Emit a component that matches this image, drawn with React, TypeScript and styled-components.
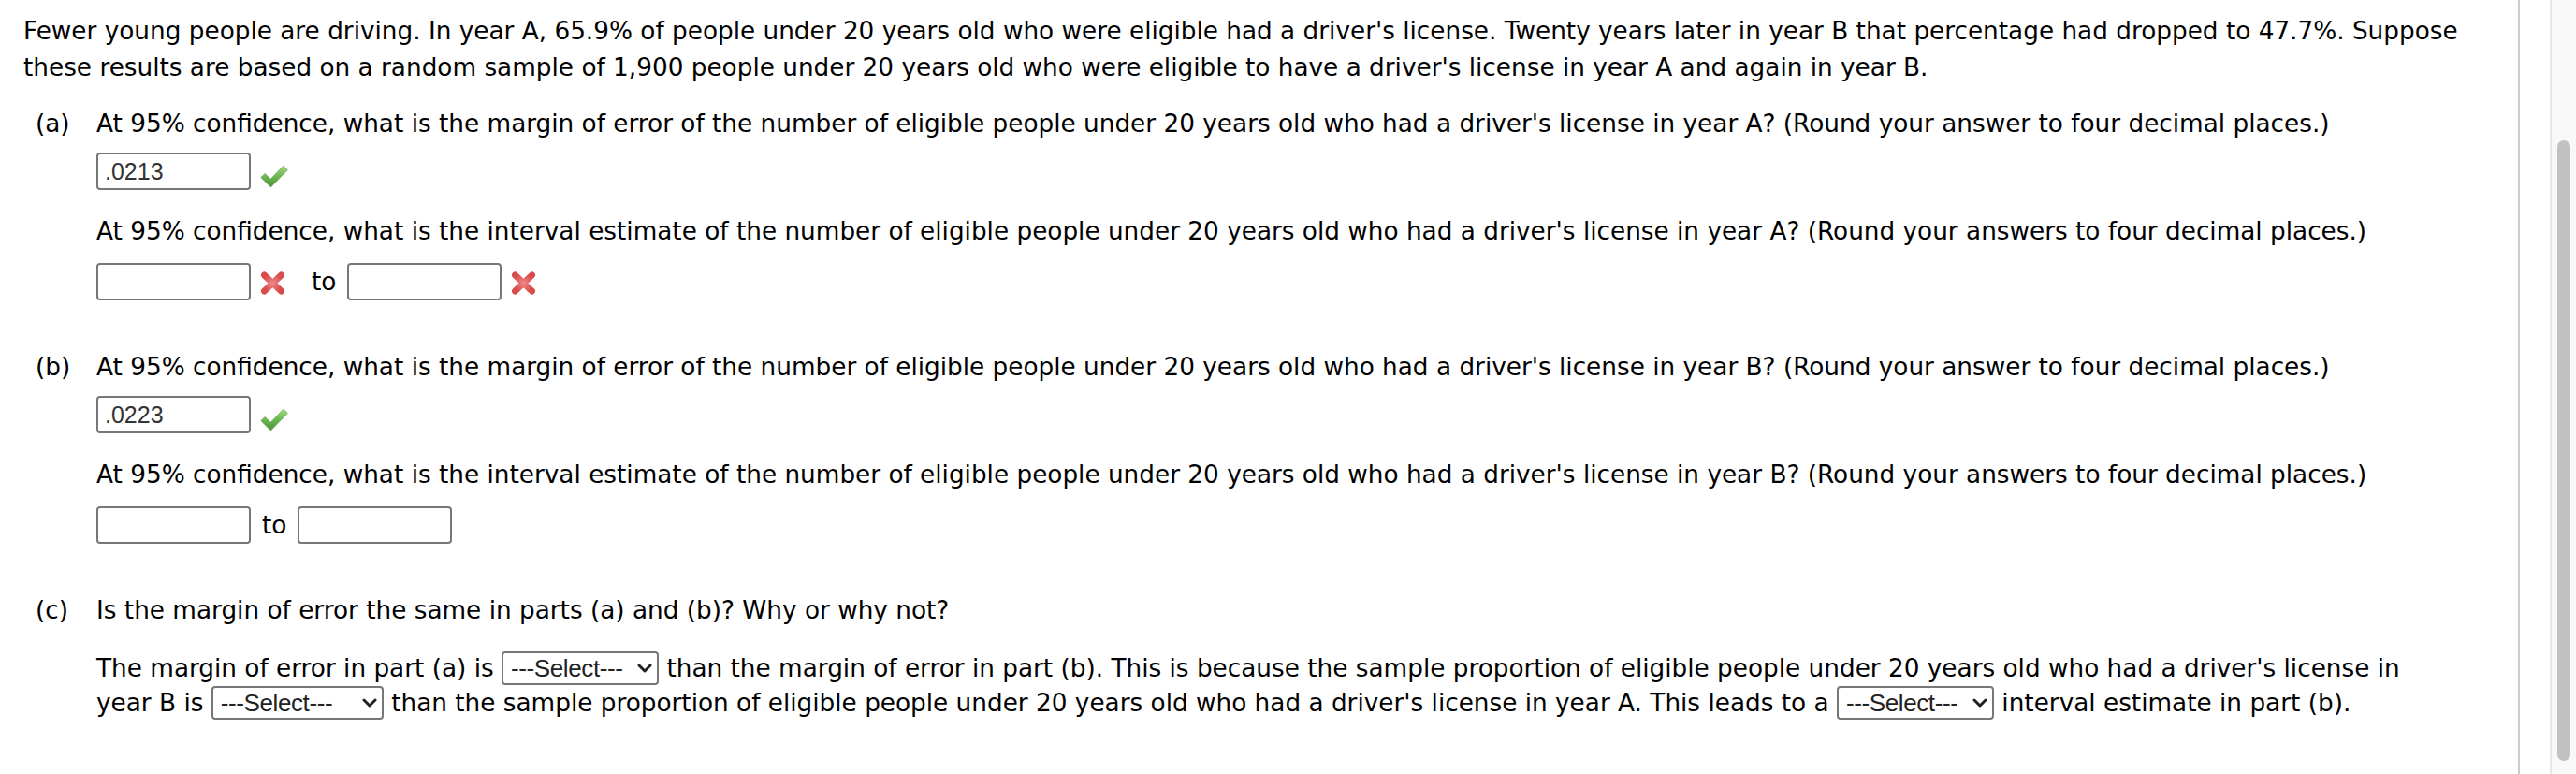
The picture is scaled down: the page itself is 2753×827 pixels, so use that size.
import React, { useId } from 'react'
import styled, { createGlobalStyle } from 'styled-components'

const GlobalStyle = createGlobalStyle`
  html, body {
    margin: 0;
    padding: 0;
    background: #ffffff;
  }
  body {
    font-family: "DejaVu Sans", Verdana, sans-serif;
    font-size: 26.3px;
    color: #000000;
  }
`

const Page = styled.div`
  display: flex;
  height: 827px;
  overflow: hidden;
`

const Main = styled.main`
  flex: 1;
  padding: 14px 19px 0 25px;
  border-right: 2px solid #cccccc;
  box-sizing: border-box;
`

const Gutter = styled.div`
  width: 32px;
`

const ScrollTrack = styled.div`
  width: 28px;
  padding: 150px 6px 0;
  border-left: 2px solid #e6e6e6;
  background: #f8f8f8;
  box-sizing: border-box;
`

const ScrollThumb = styled.div`
  height: 663px;
  border-radius: 8px;
  background: #c1c1c1;
`

const Intro = styled.p`
  margin: 0;
  line-height: 38.5px;
`

const Part = styled.section<{ first?: boolean }>`
  display: grid;
  grid-template-columns: 65px 1fr;
  margin-top: ${(p) => (p.first ? '22px' : '52px')};
  padding: 0 72px 0 13px;
`

const Label = styled.div`
  line-height: 38px;
`

const Body = styled.div`
  display: flex;
  flex-direction: column;
`

const Question = styled.p<{ gap?: number }>`
  margin: ${(p) => p.gap ?? 0}px 0 0;
  line-height: 38px;
`

const AnswerRow = styled.div<{ gap: number }>`
  display: flex;
  align-items: center;
  margin-top: ${(p) => p.gap}px;
`

const Field = styled.input`
  width: 165px;
  height: 40px;
  padding: 0 7px;
  border: 2px solid #777777;
  border-radius: 4px;
  box-sizing: border-box;
  font-family: "Liberation Sans", Arial, sans-serif;
  font-size: 25px;
  color: #333333;
  background: #ffffff;
  outline: none;
`

const To = styled.span<{ after?: boolean }>`
  margin: 0 12px 0 ${(p) => (p.after ? '28px' : '12px')};
  line-height: 38px;
`

const Mark = styled.svg<{ drop?: number }>`
  display: block;
  margin-left: 10px;
  margin-top: ${(p) => p.drop ?? 0}px;
  flex-shrink: 0;
`

const Sentence = styled.p`
  margin: 25px 0 0;
  line-height: 37px;
`

const SelectWrap = styled.span`
  position: relative;
  display: inline-block;
  vertical-align: middle;
  margin-top: -4px;
`

const Select = styled.select<{ w: number }>`
  appearance: none;
  display: block;
  width: ${(p) => p.w}px;
  height: 36px;
  padding: 0 0 0 8px;
  border: 2px solid #777777;
  border-radius: 4px;
  box-sizing: border-box;
  background: #ffffff;
  font-family: "Liberation Sans", Arial, sans-serif;
  font-size: 26px;
  letter-spacing: -0.4px;
  color: #222222;
  outline: none;
`

const Chevron = styled.svg`
  position: absolute;
  right: 7px;
  top: 13px;
  pointer-events: none;
`

const CheckIcon = () => {
  const id = useId()
  return (
    <Mark width="30" height="25" viewBox="0 0 30 25" drop={10}>
      <defs>
        <linearGradient id={id} x1="0" y1="0" x2="0" y2="1">
          <stop offset="0" stopColor="#a3dc83" />
          <stop offset="0.5" stopColor="#6bb552" />
          <stop offset="1" stopColor="#4a9438" />
        </linearGradient>
      </defs>
      <path
        d="M0.8 13.6 L5.2 9.4 L11.2 15.2 L24.8 1.2 L29.4 5.6 L11.4 24 Z"
        fill={`url(#${id})`}
        stroke="#5a9f45"
        strokeWidth="0.6"
        strokeLinejoin="round"
      />
    </Mark>
  )
}

const CrossIcon = () => {
  const id = useId()
  return (
    <Mark width="27" height="25" viewBox="0 0 27 25" drop={2}>
      <defs>
        <radialGradient id={id} cx="0.5" cy="0.5" r="0.6">
          <stop offset="0" stopColor="#f08a8a" />
          <stop offset="1" stopColor="#d94a4a" />
        </radialGradient>
      </defs>
      <path
        d="M4.5 4 L22.5 21 M22.5 4 L4.5 21"
        stroke={`url(#${id})`}
        strokeWidth="7"
        strokeLinecap="round"
        fill="none"
      />
    </Mark>
  )
}

const Dropdown = ({ width }: { width: number }) => (
  <SelectWrap>
    <Select w={width} defaultValue="">
      <option value="">---Select---</option>
      <option value="greater">greater</option>
      <option value="less">less</option>
      <option value="same">the same</option>
    </Select>
    <Chevron width="16" height="11" viewBox="0 0 16 11">
      <path d="M2 2 L8 8 L14 2" stroke="#222222" strokeWidth="3" fill="none" strokeLinecap="round" strokeLinejoin="round" />
    </Chevron>
  </SelectWrap>
)

type Grade = 'right' | 'wrong' | undefined

const Answer = ({ value, grade }: { value?: string; grade?: Grade }) => (
  <>
    <Field readOnly defaultValue={value ?? ''} />
    {grade === 'right' && <CheckIcon />}
    {grade === 'wrong' && <CrossIcon />}
  </>
)

const App = () => (
  <>
    <GlobalStyle />
    <Page>
      <Main>
        <Intro>
          Fewer young people are driving. In year A, 65.9% of people under 20 years old who were eligible had a
          driver's license. Twenty years later in year B that percentage had dropped to 47.7%. Suppose these results
          are based on a random sample of 1,900 people under 20 years old who were eligible to have a driver's license
          in year A and again in year B.
        </Intro>

        <Part first>
          <Label>(a)</Label>
          <Body>
            <Question>
              At 95% confidence, what is the margin of error of the number of eligible people under 20 years old who
              had a driver's license in year A? (Round your answer to four decimal places.)
            </Question>
            <AnswerRow gap={12}>
              <Answer value=".0213" grade="right" />
            </AnswerRow>
            <Question gap={25}>
              At 95% confidence, what is the interval estimate of the number of eligible people under 20 years old who
              had a driver's license in year A? (Round your answers to four decimal places.)
            </Question>
            <AnswerRow gap={15}>
              <Answer grade="wrong" />
              <To after>to</To>
              <Answer grade="wrong" />
            </AnswerRow>
          </Body>
        </Part>

        <Part>
          <Label>(b)</Label>
          <Body>
            <Question>
              At 95% confidence, what is the margin of error of the number of eligible people under 20 years old who
              had a driver's license in year B? (Round your answer to four decimal places.)
            </Question>
            <AnswerRow gap={12}>
              <Answer value=".0223" grade="right" />
            </AnswerRow>
            <Question gap={25}>
              At 95% confidence, what is the interval estimate of the number of eligible people under 20 years old who
              had a driver's license in year B? (Round your answers to four decimal places.)
            </Question>
            <AnswerRow gap={15}>
              <Answer />
              <To>to</To>
              <Answer />
            </AnswerRow>
          </Body>
        </Part>

        <Part>
          <Label>(c)</Label>
          <Body>
            <Question>Is the margin of error the same in parts (a) and (b)? Why or why not?</Question>
            <Sentence>
              The margin of error in part (a) is <Dropdown width={168} /> than the margin of error in part (b). This
              is because the sample proportion of eligible people under 20 years old who had a driver's license in
              year B is <Dropdown width={184} /> than the sample proportion of eligible people under 20 years old who
              had a driver's license in year A. This leads to a <Dropdown width={168} /> interval estimate in part (b).
            </Sentence>
          </Body>
        </Part>
      </Main>
      <Gutter />
      <ScrollTrack>
        <ScrollThumb />
      </ScrollTrack>
    </Page>
  </>
)

export default App
